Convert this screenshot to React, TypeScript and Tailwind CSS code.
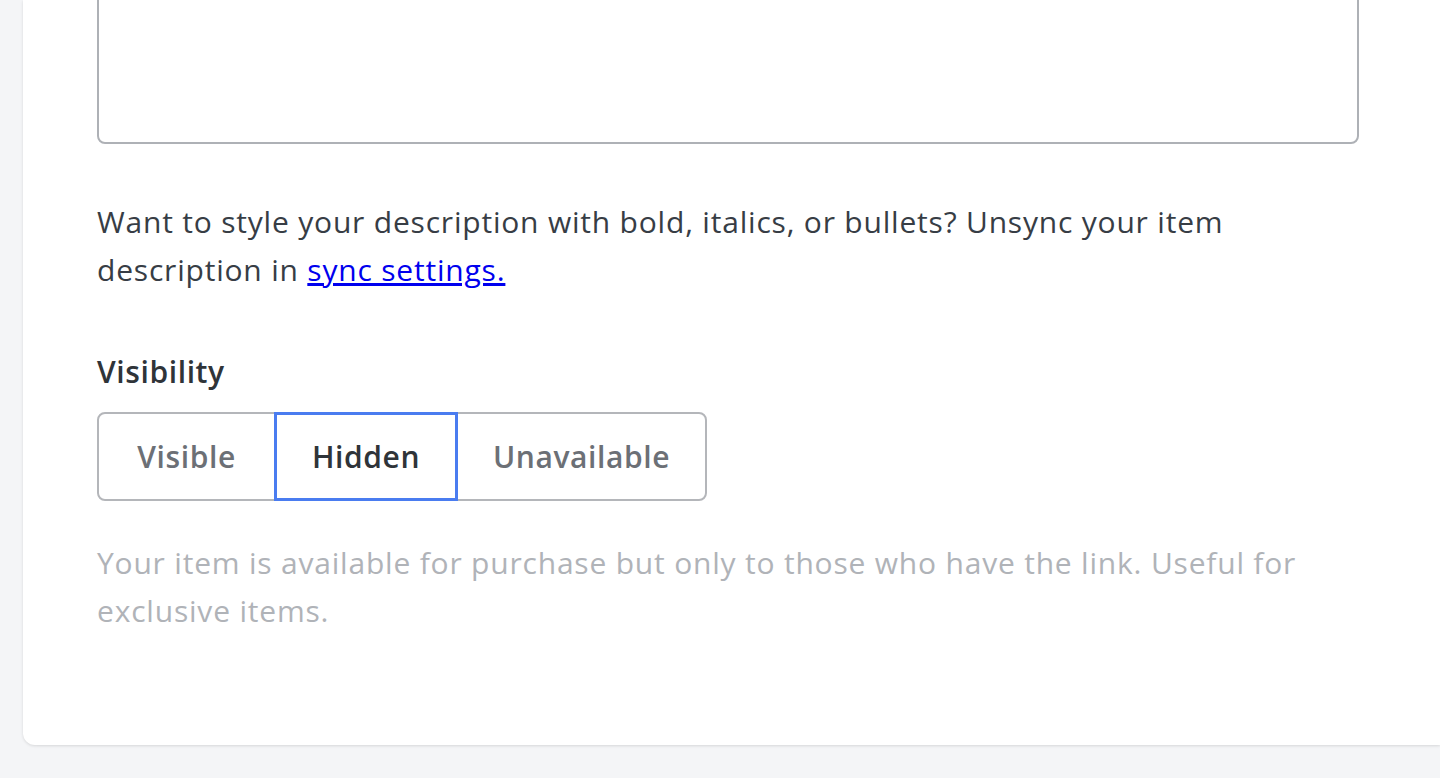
import { useState } from 'react';

const options = [
  { label: 'Visible', width: 'w-[175px]' },
  { label: 'Hidden', width: 'w-[184px]' },
  { label: 'Unavailable', width: 'w-[247px]' },
];

function VisibilityToggle() {
  const [selected, setSelected] = useState('Hidden');

  return (
    <div className="flex h-[89px] w-fit rounded-[8px] border-2 border-[#b4b6ba]">
      {options.map((opt) => {
        const active = opt.label === selected;
        return (
          <button
            key={opt.label}
            onClick={() => setSelected(opt.label)}
            className={
              active
                ? `${opt.width} -my-[2px] flex items-center justify-center border-[3px] border-[#4a7cf0] text-[30px] font-semibold tracking-[0.6px] text-[#2f3439]`
                : `${opt.width} flex items-center justify-center text-[30px] font-semibold tracking-[0.6px] text-[#6c7076]`
            }
          >
            {opt.label}
          </button>
        );
      })}
    </div>
  );
}

export default function App() {
  return (
    <div className="h-[778px] overflow-hidden bg-[#f4f5f7] pl-[23px] font-['Open_Sans',sans-serif]">
      <div className="flex h-[745px] flex-col rounded-bl-[12px] bg-white pl-[74px] pr-[81px] shadow-[0_1px_3px_rgba(0,0,0,0.12)]">
        <div className="-mt-[20px] h-[164px] shrink-0 rounded-[8px] border-2 border-[#aeb1b6]" />

        <p className="mt-[54px] text-[30px] leading-[48px] tracking-[0.8px] text-[#373d45]">
          Want to style your description with bold, italics, or bullets? Unsync your item
          <br />
          description in{' '}
          <a href="#" className="text-[#0000ee] underline">
            sync settings.
          </a>
        </p>

        <h3 className="mt-[60px] text-[30px] font-semibold leading-[36px] tracking-[0.6px] text-[#2f3439]">Visibility</h3>

        <div className="mt-[22px]">
          <VisibilityToggle />
        </div>

        <p className="mt-[38px] text-[30px] leading-[48px] tracking-[0.8px] text-[#b0b3b8]">
          Your item is available for purchase but only to those who have the link. Useful for
          <br />
          exclusive items.
        </p>
      </div>
    </div>
  );
}
